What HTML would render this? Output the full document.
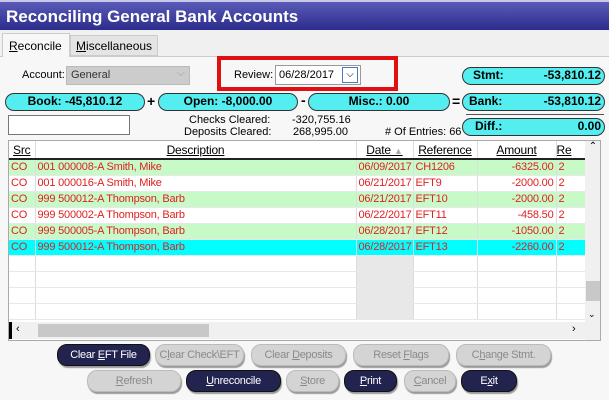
<!DOCTYPE html>
<html><head><style>
*{box-sizing:border-box;margin:0;padding:0}
body{width:609px;height:400px;overflow:hidden;background:#f0f0f0;font-family:"Liberation Sans",Arial,sans-serif;font-size:11px;position:relative;color:#000}
.a{position:absolute}
.title{left:0;top:0;width:609px;height:30px;background:linear-gradient(#5a5ab8,#2c2c8c);color:#fff;font-weight:bold;font-size:17px;padding:5px 0 0 6px;border-top:2px solid #c8c8e8}
.pill{position:absolute;height:18px;background:#55eef0;border:1.5px solid #333;border-radius:9px;font-weight:bold;font-size:12px;line-height:15px}
.btn{position:absolute;height:22px;border-radius:10px;font-size:11px;text-align:center;line-height:20px;box-shadow:1px 2px 1px #999;letter-spacing:-0.3px}
.dk{background:#23234f;color:#fff;border:1px solid #111}
.lt{background:#d4d4d4;color:#8a8a8a;border:1px solid #bbb}
table{border-collapse:collapse;font-size:11px;letter-spacing:-0.2px}
td{height:16px;padding:0 2px;border-right:1px solid #ddd;border-bottom:1px solid #e8e8e8;color:#e02020;white-space:nowrap;overflow:hidden}
tr.g td{background:#c8fac8}
tr.c td{background:#00ffff}
tr.e td{color:#000}
tr.e td.d{background:#e8e8e8}
th{height:18px;font-weight:normal;text-decoration:underline;font-size:12px;border-bottom:2px solid #222;border-right:1px solid #ddd;background:#fff;white-space:nowrap;overflow:hidden}
</style></head><body>
<div class="a title">Reconciling General Bank Accounts</div>
<div class="a" style="left:0;top:56px;width:609px;height:344px;background:#f7f7f7;border-top:1px solid #ccc"></div>
<div class="a" style="left:2px;top:33px;width:68px;height:24px;background:#f7f7f7;border:1px solid #ccc;border-bottom:none;font-size:12px;padding:5px 0 0 6px"><u>R</u>econcile</div>
<div class="a" style="left:70px;top:35px;width:88px;height:21px;background:#e4e4e4;border:1px solid #ccc;font-size:12px;padding:3px 0 0 5px"><u>M</u>iscellaneous</div>
<div class="a" style="left:22px;top:69px">Account:</div>
<div class="a" style="left:66px;top:66px;width:124px;height:19px;background:#ccc;border:1px solid #bbb;padding:2px 4px;color:#333">General<span style="position:absolute;right:4px;top:0;color:#999">⌵</span></div>
<div class="a" style="left:217px;top:56px;width:181px;height:35px;border:4px solid #e01010"></div>
<div class="a" style="left:234px;top:69px">Review:</div>
<div class="a" style="left:275px;top:65px;width:86px;height:20px;background:#fff;border:1px solid #999;padding:3px 3px">06/28/2017<span style="position:absolute;right:2px;top:1px;width:16px;height:16px;border:1px solid #4a7ac0;text-align:center;line-height:13px;font-size:10px">⌵</span></div>
<div class="pill" style="left:462px;top:67px;width:143px;padding:0 3px 0 10px"><span>Stmt:</span><span style="float:right">-53,810.12</span></div>
<div class="pill" style="left:5px;top:93px;width:140px;text-align:center">Book: -45,810.12</div>
<div class="a" style="left:147px;top:93px;font-weight:bold;font-size:14px">+</div>
<div class="pill" style="left:158px;top:93px;width:140px;text-align:center">Open: -8,000.00</div>
<div class="a" style="left:301px;top:92px;font-weight:bold;font-size:14px">-</div>
<div class="pill" style="left:308px;top:93px;width:142px;text-align:center">Misc.: 0.00</div>
<div class="a" style="left:452px;top:93px;font-weight:bold;font-size:14px">=</div>
<div class="pill" style="left:462px;top:93px;width:143px;padding:0 3px 0 6px"><span>Bank:</span><span style="float:right">-53,810.12</span></div>
<div class="a" style="left:466px;top:114px;width:138px;border-top:1px solid #555"></div>
<div class="pill" style="left:462px;top:118px;width:143px;padding:0 3px 0 12px"><span>Diff.:</span><span style="float:right">0.00</span></div>
<div class="a" style="left:8px;top:115px;width:122px;height:20px;background:#fff;border:1px solid #777"></div>
<div class="a" style="left:189px;top:114px">Checks Cleared:</div>
<div class="a" style="left:292px;top:114px;width:56px;text-align:right">-320,755.16</div>
<div class="a" style="left:184px;top:126px">Deposits Cleared:</div>
<div class="a" style="left:292px;top:126px;width:56px;text-align:right">268,995.00</div>
<div class="a" style="left:385px;top:126px"># Of Entries: 66</div>
<div class="a" style="left:8px;top:140px;width:593px;height:201px;background:#fff;border:1px solid #aaa;overflow:hidden">
<table style="width:576px;table-layout:fixed">
<colgroup><col style="width:26px"><col style="width:321px"><col style="width:57px"><col style="width:64px"><col style="width:79px"><col style="width:29px"></colgroup>
<tr><th>Src</th><th>Description</th><th>Date <span style="color:#aaa;text-decoration:none;font-size:9px">▲</span></th><th>Reference</th><th>Amount</th><th style="text-align:left">Re</th></tr>
<tr class="g"><td>CO</td><td>001 000008-A Smith, Mike</td><td>06/09/2017</td><td>CH1206</td><td style="text-align:right">-6325.00</td><td>2</td></tr>
<tr><td>CO</td><td>001 000016-A Smith, Mike</td><td>06/21/2017</td><td>EFT9</td><td style="text-align:right">-2000.00</td><td>2</td></tr>
<tr class="g"><td>CO</td><td>999 500012-A Thompson, Barb</td><td>06/21/2017</td><td>EFT10</td><td style="text-align:right">-2000.00</td><td>2</td></tr>
<tr><td>CO</td><td>999 500002-A Thompson, Barb</td><td>06/22/2017</td><td>EFT11</td><td style="text-align:right">-458.50</td><td>2</td></tr>
<tr class="g"><td>CO</td><td>999 500005-A Thompson, Barb</td><td>06/28/2017</td><td>EFT12</td><td style="text-align:right">-1050.00</td><td>2</td></tr>
<tr class="c"><td>CO</td><td>999 500012-A Thompson, Barb</td><td>06/28/2017</td><td>EFT13</td><td style="text-align:right">-2260.00</td><td>2</td></tr>
<tr class="e"><td></td><td></td><td class="d"></td><td></td><td></td><td></td></tr>
<tr class="e"><td></td><td></td><td class="d"></td><td></td><td></td><td></td></tr>
<tr class="e"><td></td><td></td><td class="d"></td><td></td><td></td><td></td></tr>
<tr class="e"><td></td><td></td><td class="d"></td><td></td><td></td><td></td></tr>
</table>
<div class="a" style="left:576px;top:0;width:16px;height:199px;background:#f0f0f0;text-align:center;font-size:10px">⌃<div class="a" style="left:1px;top:140px;width:14px;height:20px;background:#c8c8c8"></div><div class="a" style="left:3px;top:168px;font-size:9px">⌄</div></div>
<div class="a" style="left:0;top:181px;width:576px;height:17px;background:#f0f0f0;border-left:3px solid #000;font-size:11px"><span class="a" style="left:4px;top:1px">‹</span><div class="a" style="left:26px;top:2px;width:171px;height:13px;background:#c8c8c8"></div><span class="a" style="left:560px;top:1px">›</span></div>
</div>
<div class="btn dk" style="left:57px;top:344px;width:93px">Clear <u>E</u>FT File</div>
<div class="btn lt" style="left:155px;top:344px;width:89px">C<u>l</u>ear Check\EFT</div>
<div class="btn lt" style="left:251px;top:344px;width:95px">Clear <u>D</u>eposits</div>
<div class="btn lt" style="left:353px;top:344px;width:96px">Reset <u>F</u>lags</div>
<div class="btn lt" style="left:456px;top:344px;width:95px">C<u>h</u>ange Stmt.</div>
<div class="btn lt" style="left:87px;top:370px;width:94px"><u>R</u>efresh</div>
<div class="btn dk" style="left:186px;top:370px;width:95px"><u>U</u>nreconcile</div>
<div class="btn lt" style="left:286px;top:370px;width:53px"><u>S</u>tore</div>
<div class="btn dk" style="left:344px;top:370px;width:53px"><u>P</u>rint</div>
<div class="btn lt" style="left:404px;top:370px;width:52px"><u>C</u>ancel</div>
<div class="btn dk" style="left:461px;top:370px;width:56px">E<u>x</u>it</div>
</body></html>
